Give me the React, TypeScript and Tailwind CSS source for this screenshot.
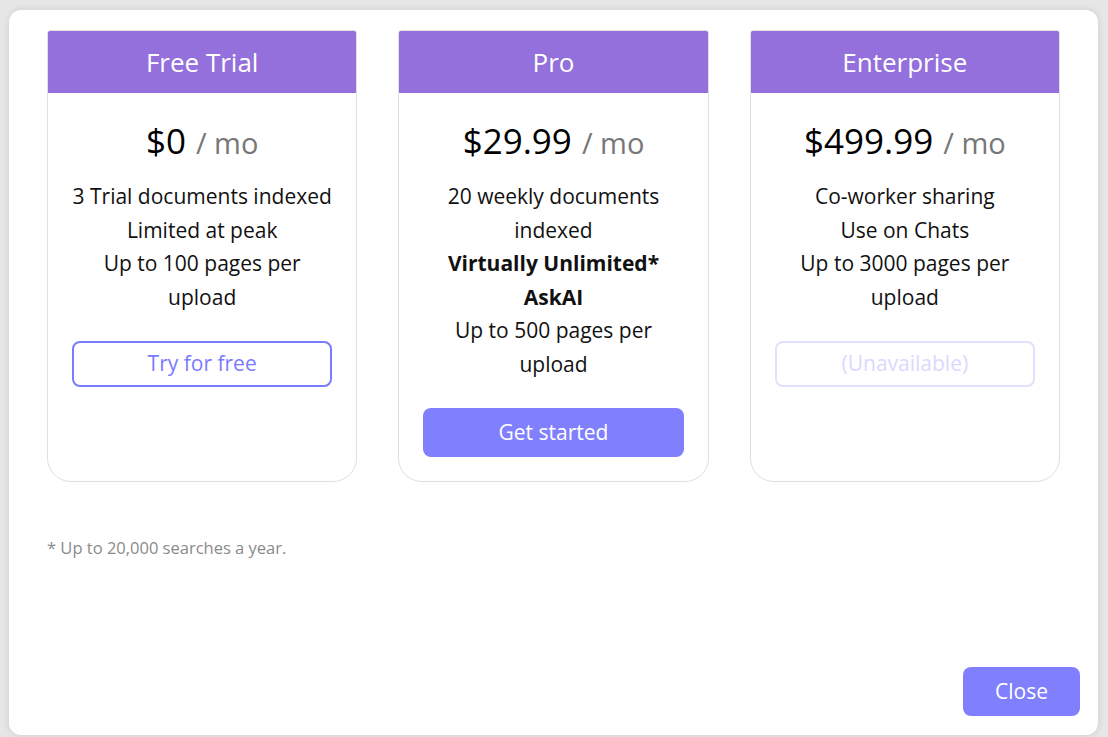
import type { ReactNode } from "react";

type Plan = {
  name: string;
  price: string;
  features: ReactNode[];
  action: "outline" | "solid" | "disabled";
  actionLabel: string;
};

const plans: Plan[] = [
  {
    name: "Free Trial",
    price: "$0",
    features: ["3 Trial documents indexed", "Limited at peak", "Up to 100 pages per upload"],
    action: "outline",
    actionLabel: "Try for free",
  },
  {
    name: "Pro",
    price: "$29.99",
    features: [
      "20 weekly documents indexed",
      <strong key="ai" className="font-bold">Virtually Unlimited* AskAI</strong>,
      "Up to 500 pages per upload",
    ],
    action: "solid",
    actionLabel: "Get started",
  },
  {
    name: "Enterprise",
    price: "$499.99",
    features: ["Co-worker sharing", "Use on Chats", "Up to 3000 pages per upload"],
    action: "disabled",
    actionLabel: "(Unavailable)",
  },
];

function PlanButton({ plan }: { plan: Plan }) {
  if (plan.action === "solid") {
    return (
      <button className="h-[49px] w-full rounded-lg bg-[#8080ff] text-[21px] text-white">
        {plan.actionLabel}
      </button>
    );
  }
  if (plan.action === "disabled") {
    return (
      <button
        disabled
        className="h-[46px] w-full rounded-lg border-2 border-[#e0e0ff] text-[21px] text-[#d9d9ff]"
      >
        {plan.actionLabel}
      </button>
    );
  }
  return (
    <button className="h-[46px] w-full rounded-lg border-2 border-[#7b7bff] text-[21px] text-[#7b7bff]">
      {plan.actionLabel}
    </button>
  );
}

function PlanCard({ plan }: { plan: Plan }) {
  return (
    <div className="flex flex-col overflow-hidden rounded-b-[24px] rounded-t-[3px] border border-[#e0e0e0] bg-white">
      <div className="flex h-[62px] items-center justify-center bg-[#9370db] text-[26px] text-white">
        {plan.name}
      </div>
      <div className="flex flex-col items-center px-6 pt-[30px] pb-[24px] text-center">
        <div className="flex items-baseline gap-[10px] leading-[1]">
          <span className="text-[35px] text-black">{plan.price}</span>
          <span className="text-[29px] text-[#777]">/ mo</span>
        </div>
        <ul className="mt-[22px] w-[266px] text-[21px] leading-[33.5px] text-[#111]">
          {plan.features.map((f, i) => (
            <li key={i}>{f}</li>
          ))}
        </ul>
        <div className="mt-[27px] w-full">
          <PlanButton plan={plan} />
        </div>
      </div>
    </div>
  );
}

export default function App() {
  return (
    <div
      className="h-[737px] w-[1108px] bg-[#e6e6e6] pt-[10px] pl-[9px]"
      style={{ fontFamily: '"Open Sans", "Noto Sans", sans-serif' }}
    >
      <div className="flex h-[725px] w-[1089px] flex-col rounded-xl bg-white pt-[20px] pr-[18px] pb-[19px] pl-[38px] shadow-[0_0_6px_rgba(0,0,0,0.12)]">
        <div className="mr-[20px] grid grid-cols-3 gap-[41px]">
          {plans.map((p) => (
            <PlanCard key={p.name} plan={p} />
          ))}
        </div>
        <p className="mt-[54px] text-[16.5px] text-[#8a8a8a]">* Up to 20,000 searches a year.</p>
        <div className="mt-auto flex justify-end">
          <button className="h-[49px] w-[117px] rounded-lg bg-[#8080ff] text-[21px] text-white">
            Close
          </button>
        </div>
      </div>
    </div>
  );
}
